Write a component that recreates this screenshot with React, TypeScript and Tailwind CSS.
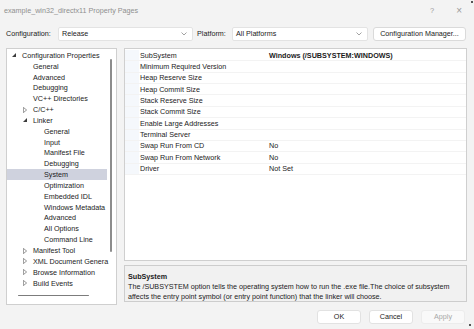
import React from "react"

type Node = { label: string; level: number; state?: "open" | "closed"; selected?: boolean }

const tree: Node[] = [
  { label: "Configuration Properties", level: 0, state: "open" },
  { label: "General", level: 1 },
  { label: "Advanced", level: 1 },
  { label: "Debugging", level: 1 },
  { label: "VC++ Directories", level: 1 },
  { label: "C/C++", level: 1, state: "closed" },
  { label: "Linker", level: 1, state: "open" },
  { label: "General", level: 2 },
  { label: "Input", level: 2 },
  { label: "Manifest File", level: 2 },
  { label: "Debugging", level: 2 },
  { label: "System", level: 2, selected: true },
  { label: "Optimization", level: 2 },
  { label: "Embedded IDL", level: 2 },
  { label: "Windows Metadata", level: 2 },
  { label: "Advanced", level: 2 },
  { label: "All Options", level: 2 },
  { label: "Command Line", level: 2 },
  { label: "Manifest Tool", level: 1, state: "closed" },
  { label: "XML Document Genera", level: 1, state: "closed" },
  { label: "Browse Information", level: 1, state: "closed" },
  { label: "Build Events", level: 1, state: "closed" },
]

const props: { name: string; value?: string; bold?: boolean }[] = [
  { name: "SubSystem", value: "Windows (/SUBSYSTEM:WINDOWS)", bold: true },
  { name: "Minimum Required Version" },
  { name: "Heap Reserve Size" },
  { name: "Heap Commit Size" },
  { name: "Stack Reserve Size" },
  { name: "Stack Commit Size" },
  { name: "Enable Large Addresses" },
  { name: "Terminal Server" },
  { name: "Swap Run From CD", value: "No" },
  { name: "Swap Run From Network", value: "No" },
  { name: "Driver", value: "Not Set" },
]

const indent = ["pl-0", "pl-[11px]", "pl-[22px]"]

function Chevron() {
  return (
    <svg width="6" height="4" viewBox="0 0 6 4" className="shrink-0">
      <path d="M0.5 0.5 L3 3 L5.5 0.5" fill="none" stroke="#8a8a8a" strokeWidth="0.8" />
    </svg>
  )
}

function Toggle({ state }: { state?: "open" | "closed" }) {
  if (state === "open")
    return (
      <svg width="4" height="4" viewBox="0 0 4 4">
        <polygon points="4,0 4,4 0,4" fill="#3c3c3c" />
      </svg>
    )
  if (state === "closed")
    return (
      <svg width="4" height="6" viewBox="0 0 4 6">
        <polygon points="0.4,0.4 3.6,3 0.4,5.6" fill="none" stroke="#6a6a6a" strokeWidth="0.7" />
      </svg>
    )
  return null
}

function Combo({ value, width }: { value: string; width: string }) {
  return (
    <div
      className={`${width} flex h-[14px] items-center justify-between rounded-[2px] border border-[#e3e3e3] bg-white pl-[3px] pr-[5px]`}
    >
      <span>{value}</span>
      <Chevron />
    </div>
  )
}

export default function App() {
  return (
    <div
      className="relative h-[329px] w-[474px] overflow-hidden bg-[#f3f3f3] text-[7.2px] leading-none text-[#1b1b1b]"
      style={{ fontFamily: '"Liberation Sans", Arial, sans-serif' }}
    >
      {/* title bar */}
      <div className="flex h-[22px] items-center justify-between pl-[4px] pr-[12px] text-[#8f8f8f]">
        <span>example_win32_directx11 Property Pages</span>
        <div className="flex items-center gap-[22px] text-[#9a9a9a]">
          <span className="text-[7.5px]">?</span>
          <span className="text-[10px] font-light">×</span>
        </div>
      </div>

      {/* configuration row */}
      <div className="mt-[5px] flex items-center pl-[6px]">
        <span className="w-[52px]">Configuration:</span>
        <Combo value="Release" width="w-[135px]" />
        <span className="ml-[4px] w-[35px]">Platform:</span>
        <Combo value="All Platforms" width="w-[136px]" />
        <div className="ml-[5px] flex h-[14px] w-[93px] items-center justify-center rounded-[3px] border border-[#dadada] bg-white">
          Configuration Manager...
        </div>
      </div>

      {/* main */}
      <div className="mt-[7px] flex items-start gap-[7px] pl-[6px]">
        {/* tree */}
        <div className="relative h-[257px] w-[111px] overflow-hidden border border-[#cfcfcf] bg-white">
          <div className="pt-[1px]">
            {tree.map((n, i) => (
              <div
                key={i}
                className={`flex h-[10.85px] w-[100px] items-center whitespace-nowrap ${indent[n.level]} ${
                  n.selected ? "bg-[#cfd2de]" : ""
                }`}
              >
                <div className="flex w-[15px] shrink-0 items-center pl-[5px]">
                  <Toggle state={n.state} />
                </div>
                <span>{n.label}</span>
              </div>
            ))}
          </div>
          {/* vertical scroll thumb */}
          <div className="absolute right-[4px] top-[10px] h-[193px] w-[2px] rounded-full bg-[#8c8c8c]" />
          {/* horizontal scroll thumb */}
          <div className="absolute bottom-[8px] left-[11px] h-[1.5px] w-[71px] rounded-full bg-[#7c7c7c]" />
        </div>

        {/* right side */}
        <div className="flex w-[343px] flex-col gap-[4px]">
          <div className="h-[213px] border border-[#cfcfcf] bg-white">
            <div className="pt-[1px]">
              {props.map((p, i) => (
                <div key={i} className="flex h-[11.36px] items-center border-b border-[#f3f3f3]">
                  <div className="h-full w-[14px] shrink-0 bg-[#f5f8fc]" />
                  <span className="w-[130px] shrink-0 pl-[1px]">{p.name}</span>
                  <span className={p.bold ? "font-bold" : ""}>{p.value}</span>
                </div>
              ))}
            </div>
          </div>
          <div className="h-[37px] border border-[#cdcdcd] bg-[#f1f1f1] px-[3px] pt-[6px] leading-[10px]">
            <div className="font-bold">SubSystem</div>
            <div>
              The /SUBSYSTEM option tells the operating system how to run the .exe file.The choice of subsystem
            </div>
            <div>affects the entry point symbol (or entry point function) that the linker will choose.</div>
          </div>
        </div>
      </div>

      {/* buttons */}
      <div className="mt-[5px] flex justify-end gap-[8px] pr-[9px]">
        <div className="flex h-[14px] w-[44px] items-center justify-center rounded-[3px] border border-[#e2e2e2] bg-white">
          OK
        </div>
        <div className="flex h-[14px] w-[44px] items-center justify-center rounded-[3px] border border-[#e2e2e2] bg-white">
          Cancel
        </div>
        <div className="flex h-[14px] w-[44px] items-center justify-center rounded-[3px] border border-[#ececec] bg-[#f9f9f9] text-[#a8a8a8]">
          Apply
        </div>
      </div>

      {/* resize grip dots */}
      <div className="absolute bottom-[3px] right-[3px] h-[2px] w-[2px] bg-[#555]" />
      <div className="absolute right-[1px] top-[1px] h-[2px] w-[2px] bg-[#555]" />
    </div>
  )
}
